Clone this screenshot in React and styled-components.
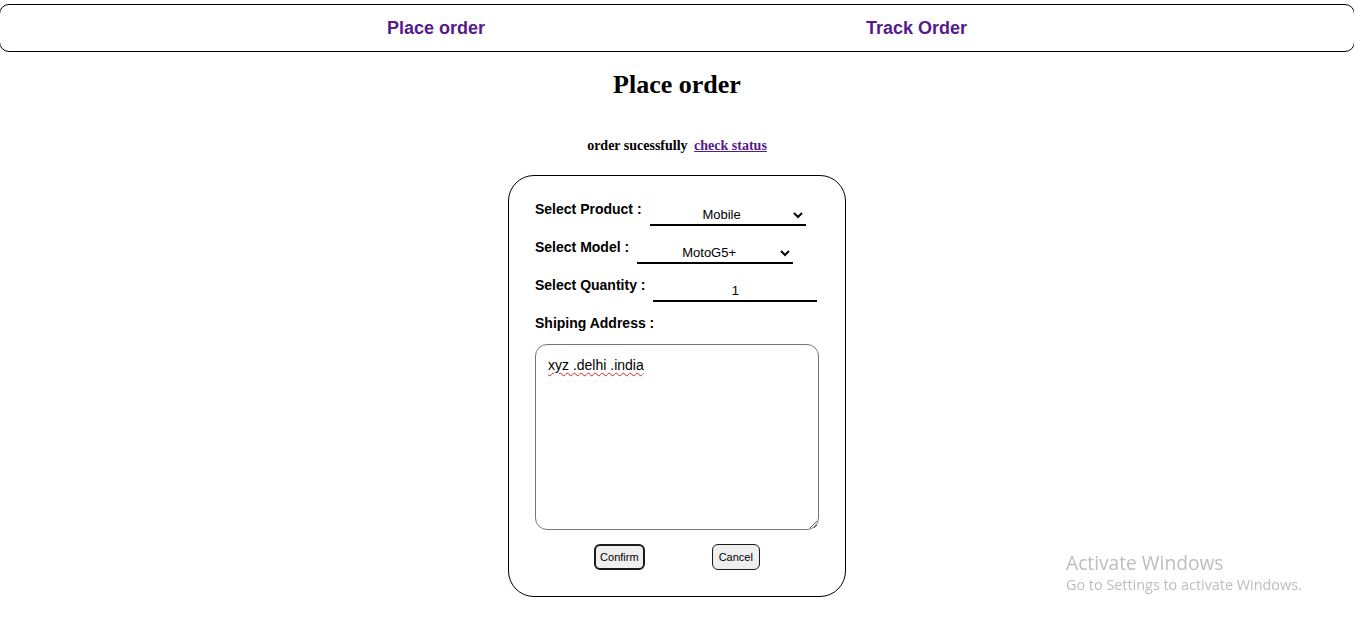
import React from 'react';
import styled, { createGlobalStyle } from 'styled-components';

const GlobalStyle = createGlobalStyle`
  body {
    margin: 0;
    background: #fff;
    font-family: "Liberation Serif", "Times New Roman", serif;
  }
`;

const Nav = styled.nav`
  display: flex;
  justify-content: center;
  align-items: center;
  gap: 381px;
  height: 46px;
  margin: 4px -1px 0;
  border: 1px solid #000;
  border-radius: 10px;
`;

const NavLink = styled.a`
  color: #551a8b;
  font-family: "Liberation Sans", Arial, sans-serif;
  font-weight: bold;
  font-size: 18px;
  text-decoration: none;
  margin-top: 1px;
`;

const Title = styled.h2`
  margin: 18px 0 0;
  text-align: center;
  font-size: 26px;
  line-height: 30px;
`;

const Message = styled.p`
  margin: 38px 0 0;
  text-align: center;
  font-size: 14px;
  font-weight: bold;
  line-height: 16px;
`;

const StatusLink = styled.a`
  margin-left: 3px;
  color: #551a8b;
  text-decoration: underline;
`;

const Card = styled.form`
  box-sizing: border-box;
  width: 338px;
  margin: 21px auto 0;
  padding: 25px 26px 26px 26px;
  border: 1px solid #000;
  border-radius: 26px;
  font-family: "Liberation Sans", Arial, sans-serif;
`;

const Row = styled.div`
  display: flex;
  align-items: flex-start;
  gap: 8px;
  height: ${(p) => p.$height || 38}px;
`;

const Label = styled.label`
  font-size: 14px;
  font-weight: bold;
  line-height: 16px;
  color: #000;
`;

const Select = styled.select`
  box-sizing: border-box;
  width: ${(p) => p.$width}px;
  height: 22px;
  margin-top: 3px;
  padding: 0 4px;
  border: none;
  border-bottom: 2px solid #000;
  background: #fff;
  font-family: "Liberation Sans", Arial, sans-serif;
  font-size: 13px;
  text-align: center;
  text-align-last: center;
  color: #000;
  outline: none;
`;

const Input = styled.input`
  box-sizing: border-box;
  width: 164px;
  height: 22px;
  margin: 3px 0 0;
  padding: 0;
  border: none;
  border-bottom: 2px solid #000;
  font-family: "Liberation Sans", Arial, sans-serif;
  font-size: 13px;
  text-align: center;
  outline: none;
`;

const Address = styled.textarea`
  box-sizing: border-box;
  display: block;
  width: 284px;
  height: 186px;
  padding: 12px 12px;
  border: 1px solid #767676;
  border-radius: 12px;
  font-family: "Liberation Sans", Arial, sans-serif;
  font-size: 14px;
  line-height: 17px;
  color: #000;
  text-decoration: underline wavy #d22 1px;
  text-underline-offset: 2px;
  outline: none;
`;

const Actions = styled.div`
  display: flex;
  justify-content: center;
  gap: 67px;
  margin-top: 14px;
`;

const Button = styled.button`
  box-sizing: border-box;
  height: 26px;
  padding: ${(p) => (p.$focused ? '0 4px' : '0 6px')};
  border: ${(p) => (p.$focused ? '2px solid #1a1a1a' : '1px solid #1a1a1a')};
  border-radius: 6px;
  background: #efefef;
  font-family: "Liberation Sans", Arial, sans-serif;
  font-size: 11px;
  color: #000;
`;

const Watermark = styled.div`
  position: fixed;
  left: 1066px;
  top: 550px;
  color: #bdbdbd;
  font-family: "Open Sans", "Noto Sans", sans-serif;
  pointer-events: none;
`;

const WatermarkTitle = styled.div`
  font-size: 19.2px;
  line-height: 26px;
`;

const WatermarkText = styled.div`
  font-size: 14.4px;
  line-height: 18px;
`;

export default function App() {
  return (
    <>
      <GlobalStyle />
      <Nav>
        <NavLink href="#place">Place order</NavLink>
        <NavLink href="#track">Track Order</NavLink>
      </Nav>
      <Title>Place order</Title>
      <Message>
        order sucessfully <StatusLink href="#status">check status</StatusLink>
      </Message>
      <Card onSubmit={(e) => e.preventDefault()}>
        <Row>
          <Label>Select Product :</Label>
          <Select $width={156} defaultValue="Mobile">
            <option>Mobile</option>
            <option>Laptop</option>
          </Select>
        </Row>
        <Row>
          <Label>Select Model :</Label>
          <Select $width={156} defaultValue="MotoG5+">
            <option>MotoG5+</option>
            <option>MotoG6</option>
          </Select>
        </Row>
        <Row>
          <Label>Select Quantity :</Label>
          <Input type="text" defaultValue="1" />
        </Row>
        <Row $height={29}>
          <Label>Shiping Address :</Label>
        </Row>
        <Address defaultValue="xyz .delhi .india" />
        <Actions>
          <Button type="button" $focused>Confirm</Button>
          <Button type="button">Cancel</Button>
        </Actions>
      </Card>
      <Watermark>
        <WatermarkTitle>Activate Windows</WatermarkTitle>
        <WatermarkText>Go to Settings to activate Windows.</WatermarkText>
      </Watermark>
    </>
  );
}
